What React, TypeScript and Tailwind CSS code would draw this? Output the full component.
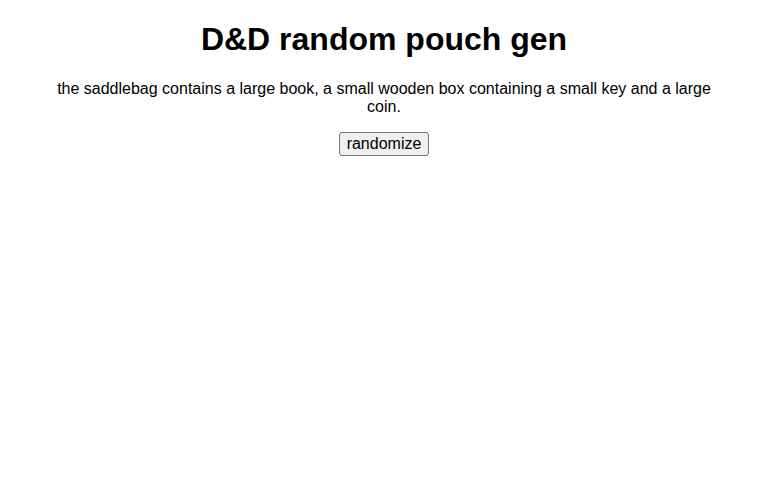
import React, { useState } from 'react';

const sizes = ['small', 'large', 'tiny', 'heavy'];
const items = ['book', 'wooden box', 'key', 'coin', 'dagger', 'scroll'];

export default function App() {
  const [contents, setContents] = useState(
    'the saddlebag contains a large book, a small wooden box containing a small key and a large coin.'
  );

  const randomize = () => {
    const pick = (xs: string[]) => xs[Math.floor(Math.random() * xs.length)];
    setContents(`the saddlebag contains a ${pick(sizes)} ${pick(items)} and a ${pick(sizes)} ${pick(items)}.`);
  };

  return (
    <div className="min-h-[480px] bg-white px-10 text-center text-black font-['Liberation_Sans',Arial,sans-serif]">
      <h1 className="pt-[21px] pb-[22px] text-[32px] font-bold leading-[37px]">D&amp;D random pouch gen</h1>
      <p className="text-base leading-[18px]">{contents}</p>
      <button
        onClick={randomize}
        className="mt-4 rounded-[3px] border border-[#767676] bg-[#efefef] px-[7px] py-[1px] text-base leading-[20px] text-black"
      >
        randomize
      </button>
    </div>
  );
}
